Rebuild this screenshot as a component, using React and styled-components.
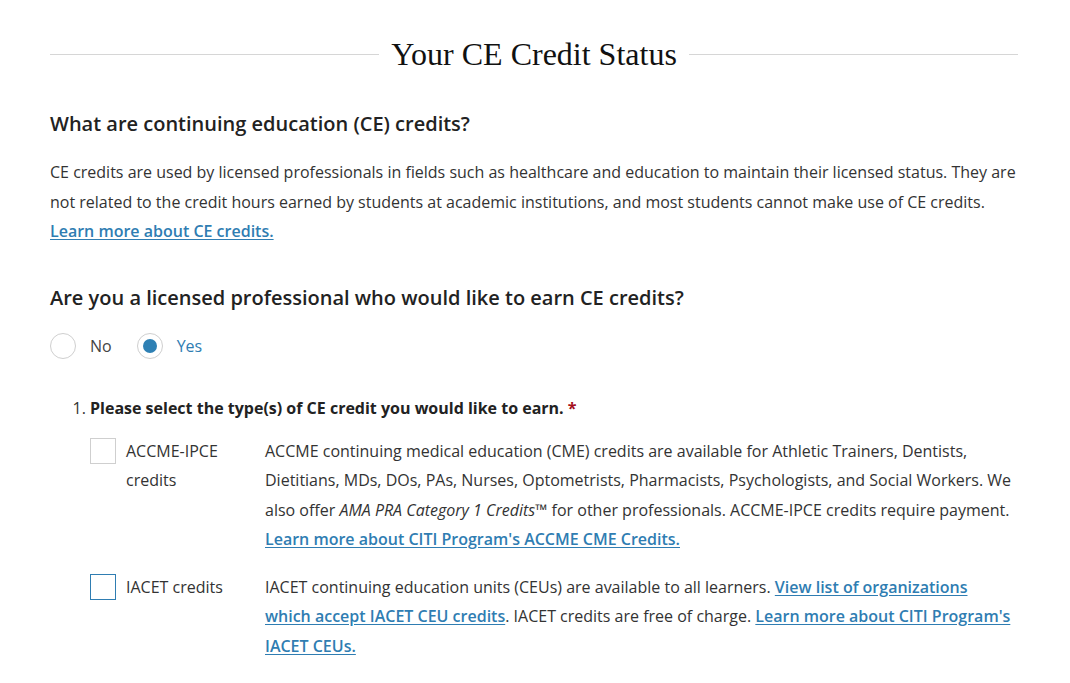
import React, { useState } from 'react'
import styled, { createGlobalStyle } from 'styled-components'

const GlobalStyle = createGlobalStyle`
  body {
    margin: 0;
    background: #fff;
    font-family: 'Open Sans', 'Noto Sans', sans-serif;
    color: #333;
  }
`

const Page = styled.div`
  width: 968px;
  padding: 26px 0 30px 50px;
`

const TitleRow = styled.div`
  display: flex;
  align-items: center;
  gap: 12px;
  &::before,
  &::after {
    content: '';
    flex: 1;
    height: 1px;
    background: #d6d6d6;
  }
`

const Title = styled.h1`
  margin: 0;
  font-family: 'Liberation Serif', 'DejaVu Serif', serif;
  font-weight: 400;
  font-size: 32px;
  line-height: 56px;
  color: #111;
`

const Heading = styled.h2`
  margin: ${(p) => p.$top || '28px'} 0 0;
  font-size: 20px;
  font-weight: 600;
  line-height: 28px;
  color: #222;
`

const Text = styled.p`
  margin: 20px 0 0;
  font-size: 16px;
  line-height: 29.5px;
  color: #333;
`

const A = styled.a`
  color: #2f7db2;
  font-weight: 600;
  text-decoration: underline;
  text-underline-offset: 2px;
  cursor: pointer;
`

const RadioGroup = styled.div`
  display: flex;
  align-items: center;
  gap: 25px;
  margin-top: 21px;
`

const RadioLabel = styled.label`
  display: flex;
  align-items: center;
  gap: 14px;
  font-size: 16px;
  color: ${(p) => (p.$checked ? '#2f7db2' : '#444')};
  cursor: pointer;
`

const RadioCircle = styled.span`
  width: 24px;
  height: 24px;
  border: 1px solid #cfcfcf;
  border-radius: 50%;
  display: flex;
  align-items: center;
  justify-content: center;
  &::after {
    content: '';
    width: 14px;
    height: 14px;
    border-radius: 50%;
    background: ${(p) => (p.$checked ? '#2e80b4' : 'transparent')};
  }
`

const Steps = styled.ol`
  margin: 37px 0 0;
  padding-left: 40px;
  font-size: 16px;
  color: #333;
`

const Step = styled.li`
  line-height: 24px;
`

const StepTitle = styled.strong`
  font-weight: 700;
  color: #222;
`

const Required = styled.span`
  color: #a5101c;
  font-weight: 700;
`

const Options = styled.div`
  display: flex;
  flex-direction: column;
  gap: 20px;
  margin-top: 19px;
`

const Option = styled.div`
  display: grid;
  grid-template-columns: 26px 129px 1fr;
  column-gap: 10px;
  align-items: start;
`

const Box = styled.span`
  width: 24px;
  height: 24px;
  margin-top: -1px;
  border: 1px solid ${(p) => (p.$focus ? '#2f7db2' : '#cfcfcf')};
  background: #fff;
`

const OptLabel = styled.span`
  font-size: 16px;
  line-height: 29.5px;
  color: #333;
  margin-top: -2px;
`

const OptText = styled.div`
  font-size: 16px;
  line-height: 29.5px;
  color: #333;
  margin-top: -2px;
  padding-right: 5px;
`

export default function App() {
  const [answer, setAnswer] = useState('yes')
  return (
    <Page>
      <GlobalStyle />
      <TitleRow>
        <Title>Your CE Credit Status</Title>
      </TitleRow>

      <Heading $top='28px'>What are continuing education (CE) credits?</Heading>
      <Text>
        CE credits are used by licensed professionals in fields such as healthcare and education to
        maintain their licensed status. They are not related to the credit hours earned by students
        at academic institutions, and most students cannot make use of CE credits.{' '}
        <A>Learn more about CE credits.</A>
      </Text>

      <Heading $top='37px'>Are you a licensed professional who would like to earn CE credits?</Heading>
      <RadioGroup>
        <RadioLabel onClick={() => setAnswer('no')} $checked={false}>
          <RadioCircle $checked={answer === 'no'} />
          No
        </RadioLabel>
        <RadioLabel onClick={() => setAnswer('yes')} $checked={answer === 'yes'}>
          <RadioCircle $checked={answer === 'yes'} />
          Yes
        </RadioLabel>
      </RadioGroup>

      <Steps>
        <Step>
          <StepTitle>Please select the type(s) of CE credit you would like to earn.</StepTitle>{' '}
          <Required>*</Required>
          <Options>
            <Option>
              <Box />
              <OptLabel>ACCME-IPCE credits</OptLabel>
              <OptText>
                ACCME continuing medical education (CME) credits are available for Athletic
                Trainers, Dentists, Dietitians, MDs, DOs, PAs, Nurses, Optometrists, Pharmacists,
                Psychologists, and Social Workers. We also offer <em>AMA PRA Category 1 Credits</em>™
                for other professionals. ACCME-IPCE credits require payment.{' '}
                <A>Learn more about CITI Program's ACCME CME Credits.</A>
              </OptText>
            </Option>
            <Option>
              <Box $focus />
              <OptLabel>IACET credits</OptLabel>
              <OptText>
                IACET continuing education units (CEUs) are available to all learners.{' '}
                <A>View list of organizations which accept IACET CEU credits</A>. IACET credits are
                free of charge. <A>Learn more about CITI Program's IACET CEUs.</A>
              </OptText>
            </Option>
          </Options>
        </Step>
      </Steps>
    </Page>
  )
}
